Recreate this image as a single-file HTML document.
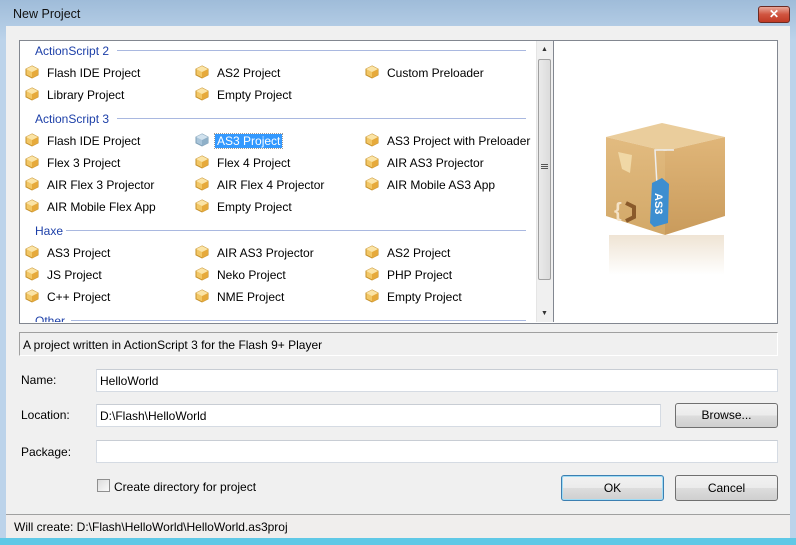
<!DOCTYPE html>
<html><head><style>
*{margin:0;padding:0;box-sizing:border-box}
body{width:796px;height:545px;overflow:hidden;background:linear-gradient(#9fbcd9,#bcd3ea 40px,#bcd3ea);font-family:"Liberation Sans",sans-serif;font-size:12px;color:#000;position:relative}
.abs{position:absolute}
.title{left:13px;top:7px;font-size:12.5px;color:#111}
.close{left:758px;top:6px;width:32px;height:17px;border:1px solid #6b2b24;border-radius:3px;background:linear-gradient(#e9a89a,#d0543f 50%,#c03a25);color:#fff;font-weight:bold;text-align:center;font-size:12px;line-height:15px}
.client{left:6px;top:26px;width:784px;height:512px;background:#f0f0f0}
.list{left:19px;top:40px;width:535px;height:284px;border:1px solid #828790;background:#fff;overflow:hidden}
.prev{left:553px;top:40px;width:225px;height:284px;border:1px solid #828790;background:#fff}
.hdr{color:#1c3fa8;font-size:12px}
.line{height:1px;background:#a9b8e0}
.item{font-size:12px}
.ic{width:14px;height:14px}
.sb{left:536px;top:41px;width:17px;height:282px;background:#f0f0f0;border-left:1px solid #e5e5e5}
.thumb{left:538px;top:59px;width:13px;height:221px;border:1px solid #a0a0a0;border-radius:2px;background:linear-gradient(90deg,#eaeaea,#dcdcdc)}
.inp{background:#fff;border:1px solid #d5dbe3;border-top-color:#c8cdd4;height:23px;padding:4px 3px;font-size:12px}
.btn{border:1px solid #707070;border-radius:3px;background:linear-gradient(#f2f2f2,#ebebeb 50%,#dddddd 51%,#cfcfcf);text-align:center;line-height:22px;font-size:12px}
</style></head><body>
<div class="abs title">New Project</div>
<div class="abs close">✕</div>
<div class="abs client"></div>
<div class="abs list">
<svg width="0" height="0" style="position:absolute"><defs>
<g id="box"><polygon points="7,1 13,4 13,10 7,13 1,10 1,4" fill="#f2c766" stroke="#c6902a" stroke-width="1"/><polygon points="7,7 13,4 13,10 7,13" fill="#e6aa3c"/><polygon points="7,1 13,4 7,7 1,4" fill="#fbe4a6"/></g>
<g id="bbox"><polygon points="7,1 13,4 13,10 7,13 1,10 1,4" fill="#a9c5da" stroke="#7e9fb6" stroke-width="1"/><polygon points="7,7 13,4 13,10 7,13" fill="#8fb0c8"/><polygon points="7,1 13,4 7,7 1,4" fill="#d1e2ee"/></g>
</defs></svg>
</div>
<div id="L"></div>
<div class="abs sb"></div>
<div class="abs" style="left:541px;top:46px;font-size:7px;color:#333">▲</div>
<div class="abs thumb"></div>
<div class="abs" style="left:541px;top:164px;width:7px;height:1px;background:#555;box-shadow:0 2px #555,0 4px #555"></div>
<div class="abs" style="left:541px;top:310px;font-size:7px;color:#333">▼</div>
<div class="abs prev">
<svg width="223" height="282" viewBox="0 0 223 282">
<defs><linearGradient id="fr" x1="0" y1="0" x2="0" y2="1"><stop offset="0" stop-color="#e2bb80"/><stop offset="1" stop-color="#d2a868"/></linearGradient>
<linearGradient id="rf" x1="0" y1="0" x2="0" y2="1"><stop offset="0" stop-color="#e0b679"/><stop offset="1" stop-color="#c99b5c"/></linearGradient>
<linearGradient id="sh" x1="0" y1="0" x2="0" y2="1"><stop offset="0" stop-color="#efe4d4"/><stop offset="1" stop-color="#fff"/></linearGradient></defs>
<rect x="55" y="194" width="115" height="40" fill="url(#sh)"/>
<polygon points="52,96 108,82 171,96 111,110" fill="#eacd9c"/>
<polygon points="52,96 111,110 111,194 52,175" fill="url(#fr)"/>
<polygon points="111,110 171,96 171,175 111,194" fill="url(#rf)"/>
<polygon points="64,111 78,114 76,132 68,128" fill="#f0d8a6"/>
<path d="M120,109 L101,109 L103,144" stroke="#eee" stroke-width="1.5" fill="none"/>
<polygon points="98,142 108,137 115,143 114,182 100,186 96,182" fill="#3d8ed0"/>
<text x="0" y="0" transform="translate(101,152) rotate(90)" fill="#fff" font-size="11" font-weight="bold" font-family="Liberation Sans,sans-serif">AS3</text>
<text x="60" y="176" fill="#f4e2c6" font-size="20" font-weight="bold" font-family="Liberation Sans,sans-serif">{</text>
<path d="M72,162 L80,166 L80,176 L72,180" stroke="#8a5a2a" stroke-width="4" fill="none"/>
</svg>
</div>
<div class="abs" style="left:19px;top:332px;width:759px;height:24px;border:1px solid #a0a0a0;border-right-color:#fff;border-bottom-color:#fff;padding:5px 3px;background:#f0f0f0">A project written in ActionScript 3 for the Flash 9+ Player</div>
<div class="abs" style="left:21px;top:373px">Name:</div>
<div class="abs inp" style="left:96px;top:369px;width:682px">HelloWorld</div>
<div class="abs" style="left:21px;top:408px">Location:</div>
<div class="abs inp" style="left:96px;top:404px;width:565px">D:\Flash\HelloWorld</div>
<div class="abs btn" style="left:675px;top:403px;width:103px;height:25px">Browse...</div>
<div class="abs" style="left:21px;top:445px">Package:</div>
<div class="abs inp" style="left:96px;top:440px;width:682px"></div>
<div class="abs" style="left:97px;top:479px;width:13px;height:13px;border:1px solid #8f8f8f;background:linear-gradient(135deg,#dcdcdc,#fafafa)"></div>
<div class="abs" style="left:114px;top:480px">Create directory for project</div>
<div class="abs btn" style="left:561px;top:475px;width:103px;height:26px;border-color:#3c7fb1;box-shadow:inset 0 0 0 1px #9fdcf5;line-height:24px">OK</div>
<div class="abs btn" style="left:675px;top:475px;width:103px;height:26px;line-height:24px">Cancel</div>
<div class="abs" style="left:6px;top:514px;width:784px;height:24px;border-top:1px solid #a0a0a0;background:#f0eeed;padding:5px 8px">Will create: D:\Flash\HelloWorld\HelloWorld.as3proj</div>
<div class="abs" style="left:0;top:538px;width:796px;height:7px;background:#5fc8e6"></div>
<script>
var h=[[50,'ActionScript 2',117],[118,'ActionScript 3',117],[230,'Haxe',66],[320,'Other',71]];
var r=[[72,['Flash IDE Project','AS2 Project','Custom Preloader']],[94,['Library Project','Empty Project']],
[140,['Flash IDE Project','AS3 Project','AS3 Project with Preloader']],[162,['Flex 3 Project','Flex 4 Project','AIR AS3 Projector']],
[184,['AIR Flex 3 Projector','AIR Flex 4 Projector','AIR Mobile AS3 App']],[206,['AIR Mobile Flex App','Empty Project']],
[252,['AS3 Project','AIR AS3 Projector','AS2 Project']],[274,['JS Project','Neko Project','PHP Project']],[296,['C++ Project','NME Project','Empty Project']]];
var s='';
h.forEach(function(x){s+='<div class="abs hdr" style="left:35px;top:'+(x[0]-6)+'px;clip-path:inset(0 0 '+(x[0]==320?'4px':'0')+' 0)">'+x[1]+'</div>';
var w=x[2];s+='<div class="abs line" style="left:'+w+'px;top:'+x[0]+'px;width:'+(526-w)+'px"></div>';});
var cx=[25,195,365];
r.forEach(function(x){x[1].forEach(function(t,i){var sel=(x[0]==140&&i==1);
s+='<svg class="abs ic" style="left:'+cx[i]+'px;top:'+(x[0]-7)+'px" viewBox="0 0 14 14"><use href="#'+(sel?'bbox':'box')+'"/></svg>';
s+='<div class="abs item" style="left:'+(cx[i]+22-(sel?2:0))+'px;top:'+(x[0]-6)+'px;'+(sel?'background:#3399ff;color:#fff;padding:0 2px;outline:1px dotted #999':'')+'">'+t+'</div>';});});
document.getElementById('L').innerHTML=s;
</script>
<div class="abs" style="left:20px;top:322px;width:534px;height:2px;background:#fff"></div>
<div class="abs" style="left:19px;top:323px;width:535px;height:1px;background:#828790"></div>
</body></html>
